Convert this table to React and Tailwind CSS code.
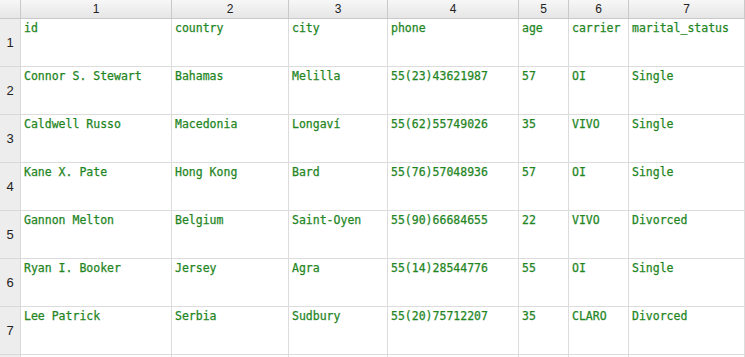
import React from "react";

const columns = ["id", "country", "city", "phone", "age", "carrier", "marital_status"];

const rows = [
  ["id", "country", "city", "phone", "age", "carrier", "marital_status"],
  ["Connor S. Stewart", "Bahamas", "Melilla", "55(23)43621987", "57", "OI", "Single"],
  ["Caldwell Russo", "Macedonia", "Longaví", "55(62)55749026", "35", "VIVO", "Single"],
  ["Kane X. Pate", "Hong Kong", "Bard", "55(76)57048936", "57", "OI", "Single"],
  ["Gannon Melton", "Belgium", "Saint-Oyen", "55(90)66684655", "22", "VIVO", "Divorced"],
  ["Ryan I. Booker", "Jersey", "Agra", "55(14)28544776", "55", "OI", "Single"],
  ["Lee Patrick", "Serbia", "Sudbury", "55(20)75712207", "35", "CLARO", "Divorced"],
  ["", "", "", "", "", "", ""],
];

const App = () => {
  return (
    <div className="w-[745px] h-[357px] overflow-hidden bg-white">
      <div className="grid grid-cols-[21px_151px_117px_99px_131px_50px_60px_1fr] grid-rows-[19px_repeat(8,48px)]">
        <div className="border-r border-b border-[#c9c9c9] bg-gradient-to-b from-[#f7f7f7] to-[#e6e6e6]"></div>
        {columns.map((c, i) => (
          <div
            key={c}
            className="flex items-center justify-center border-r border-b border-[#c9c9c9] bg-gradient-to-b from-[#f7f7f7] to-[#e6e6e6] text-[12px] text-[#222] font-['Liberation_Sans',sans-serif]"
          >
            {i + 1}
          </div>
        ))}
        {rows.map((row, r) => (
          <React.Fragment key={r}>
            <div className="flex items-center justify-center border-r border-b border-[#d9d9d9] bg-[#ededed] text-[13px] text-[#222] font-['Liberation_Sans',sans-serif]">
              {r < 7 ? r + 1 : ""}
            </div>
            {row.map((cell, c) => (
              <div
                key={c}
                className="border-r border-b border-[#dcdcdc] pl-[3px] pt-[1px] text-[11.5px] leading-[16px] text-[#1f861f] [-webkit-text-stroke:0.25px_#1f861f] font-['DejaVu_Sans_Mono',monospace] whitespace-nowrap overflow-hidden"
              >
                {cell}
              </div>
            ))}
          </React.Fragment>
        ))}
      </div>
    </div>
  );
};

export default App;
